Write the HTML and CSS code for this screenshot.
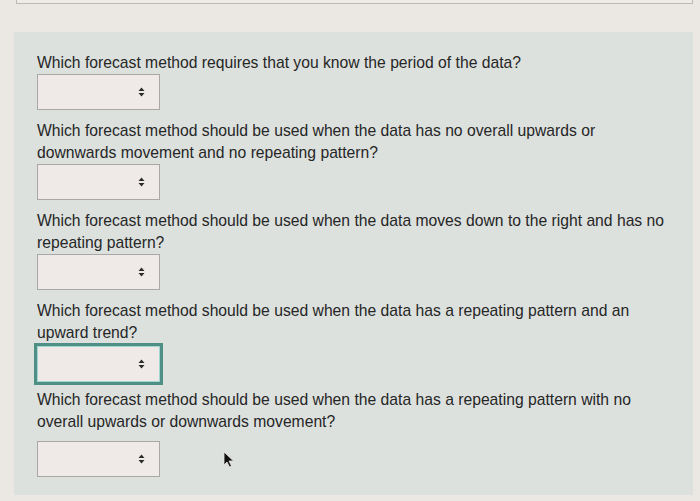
FILE: index.html
```html
<!DOCTYPE html>
<html lang="en">
<head>
<meta charset="utf-8">
<title>Forecast methods</title>
<link rel="stylesheet" href="styles.css">
</head>
<body>
<div class="topbar"></div>
<main class="panel">
  <div class="item">
    <p class="q">Which forecast method requires that you know the period of the data?</p>
    <div class="select"><svg class="arrows" width="7" height="10" viewBox="0 0 7 10"><path d="M3.5 0.5L6.5 4H0.5Z M3.5 9.5L6.5 6H0.5Z"/></svg></div>
  </div>
  <div class="item">
    <p class="q">Which forecast method should be used when the data has no overall upwards or<br>downwards movement and no repeating pattern?</p>
    <div class="select"><svg class="arrows" width="7" height="10" viewBox="0 0 7 10"><path d="M3.5 0.5L6.5 4H0.5Z M3.5 9.5L6.5 6H0.5Z"/></svg></div>
  </div>
  <div class="item">
    <p class="q">Which forecast method should be used when the data moves down to the right and has no<br>repeating pattern?</p>
    <div class="select"><svg class="arrows" width="7" height="10" viewBox="0 0 7 10"><path d="M3.5 0.5L6.5 4H0.5Z M3.5 9.5L6.5 6H0.5Z"/></svg></div>
  </div>
  <div class="item">
    <p class="q">Which forecast method should be used when the data has a repeating pattern and an<br>upward trend?</p>
    <div class="select focused"><svg class="arrows" width="7" height="10" viewBox="0 0 7 10"><path d="M3.5 0.5L6.5 4H0.5Z M3.5 9.5L6.5 6H0.5Z"/></svg></div>
  </div>
  <div class="item last">
    <p class="q">Which forecast method should be used when the data has a repeating pattern with no<br>overall upwards or downwards movement?</p>
    <div class="select"><svg class="arrows" width="7" height="10" viewBox="0 0 7 10"><path d="M3.5 0.5L6.5 4H0.5Z M3.5 9.5L6.5 6H0.5Z"/></svg></div>
    <svg class="cursor" width="12" height="17" viewBox="0 0 12 17"><path d="M1 1L1 14L4 11L6.5 16L8.5 15L6 10L10.5 10Z" fill="#111" stroke="#e8e6e2" stroke-width="0.8"/></svg>
  </div>
</main>
</body>
</html>
```
FILE: styles.css
```css
html, body {
  margin: 0;
  padding: 0;
}
body {
  background: #ebe7e3;
  font-family: "Liberation Sans", Arial, sans-serif;
  color: #262626;
  width: 700px;
  height: 501px;
  overflow: hidden;
}
.topbar {
  margin: 0 7px 0 16px;
  height: 3px;
  border: 1px solid #bdb9b5;
  border-top: none;
  background: #efebe8;
}
.panel {
  display: flex;
  flex-direction: column;
  gap: 10px;
  margin: 28px 7px 0 14px;
  height: 463px;
  box-sizing: border-box;
  padding: 20px 10px 0 23px;
  background: #dde1de;
}
.item {
  position: relative;
  display: flex;
  flex-direction: column;
  align-items: flex-start;
}
.q {
  margin: 0;
  font-size: 15.7px;
  line-height: 22px;
  white-space: nowrap;
}
.select {
  box-sizing: border-box;
  width: 123px;
  height: 36px;
  background: #efeae7;
  border: 1px solid #a9a8a6;
  display: flex;
  align-items: center;
  justify-content: flex-end;
  padding-right: 14px;
}
.select.focused {
  margin-top: 2px;
  outline: 3px solid #4f8f86;
  outline-offset: 0;
  border-color: #9fd6d0;
}
.arrows path {
  fill: #2b2b2b;
}
.item.last .q {
  margin-top: -3px;
}
.item.last .select {
  margin-top: 8px;
}
.cursor {
  position: absolute;
  left: 186px;
  top: 59px;
}
```
